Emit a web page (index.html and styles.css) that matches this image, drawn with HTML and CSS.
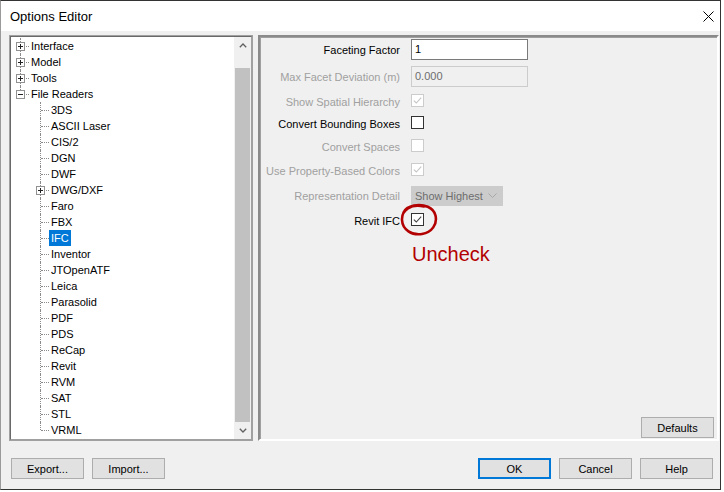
FILE: index.html
```html
<!DOCTYPE html>
<html lang="en">
<head>
  <meta charset="UTF-8" />
  <title>Options Editor</title>
  <link rel="stylesheet" href="styles.css">
</head>
<body>
  <div class="window">
    <div class="titlebar">
      <span class="title">Options Editor</span>
      <svg class="close" width="11" height="11" viewBox="0 0 11 11"><path d="M0.5 0.5L10.5 10.5M10.5 0.5L0.5 10.5" stroke="#000" stroke-width="1"/></svg>
    </div>

    <div class="content">
      <div class="main">
        <div class="tree">
          <div class="tree-inner">
            <div class="nodes">
              <div class="row l0">
                <svg class="box" width="9" height="9" viewBox="0 0 9 9"><rect x="0.5" y="0.5" width="8" height="8" fill="#fff" stroke="#919191"/><path d="M2 4.5h5M4.5 2v5" stroke="#222"/></svg>
                <span class="label">Interface</span>
              </div>
              <div class="row l0">
                <svg class="box" width="9" height="9" viewBox="0 0 9 9"><rect x="0.5" y="0.5" width="8" height="8" fill="#fff" stroke="#919191"/><path d="M2 4.5h5M4.5 2v5" stroke="#222"/></svg>
                <span class="label">Model</span>
              </div>
              <div class="row l0">
                <svg class="box" width="9" height="9" viewBox="0 0 9 9"><rect x="0.5" y="0.5" width="8" height="8" fill="#fff" stroke="#919191"/><path d="M2 4.5h5M4.5 2v5" stroke="#222"/></svg>
                <span class="label">Tools</span>
              </div>
              <div class="row l0 last">
                <svg class="box" width="9" height="9" viewBox="0 0 9 9"><rect x="0.5" y="0.5" width="8" height="8" fill="#fff" stroke="#919191"/><path d="M2 4.5h5" stroke="#222"/></svg>
                <span class="label">File Readers</span>
              </div>
              <div class="row l1"><span class="label">3DS</span></div>
              <div class="row l1"><span class="label">ASCII Laser</span></div>
              <div class="row l1"><span class="label">CIS/2</span></div>
              <div class="row l1"><span class="label">DGN</span></div>
              <div class="row l1"><span class="label">DWF</span></div>
              <div class="row l1">
                <svg class="box" width="9" height="9" viewBox="0 0 9 9"><rect x="0.5" y="0.5" width="8" height="8" fill="#fff" stroke="#919191"/><path d="M2 4.5h5M4.5 2v5" stroke="#222"/></svg>
                <span class="label">DWG/DXF</span>
              </div>
              <div class="row l1"><span class="label">Faro</span></div>
              <div class="row l1"><span class="label">FBX</span></div>
              <div class="row l1"><span class="label selected">IFC</span></div>
              <div class="row l1"><span class="label">Inventor</span></div>
              <div class="row l1"><span class="label">JTOpenATF</span></div>
              <div class="row l1"><span class="label">Leica</span></div>
              <div class="row l1"><span class="label">Parasolid</span></div>
              <div class="row l1"><span class="label">PDF</span></div>
              <div class="row l1"><span class="label">PDS</span></div>
              <div class="row l1"><span class="label">ReCap</span></div>
              <div class="row l1"><span class="label">Revit</span></div>
              <div class="row l1"><span class="label">RVM</span></div>
              <div class="row l1"><span class="label">SAT</span></div>
              <div class="row l1"><span class="label">STL</span></div>
              <div class="row l1 last"><span class="label">VRML</span></div>
            </div>

            <div class="scrollbar">
              <div class="arrow">
                <svg width="8" height="5" viewBox="0 0 8 5"><path d="M0.8 4.2L4 1L7.2 4.2" fill="none" stroke="#606060" stroke-width="1.3"/></svg>
              </div>
              <div class="track"><div class="thumb"></div></div>
              <div class="arrow">
                <svg width="8" height="5" viewBox="0 0 8 5"><path d="M0.8 0.8L4 4L7.2 0.8" fill="none" stroke="#606060" stroke-width="1.3"/></svg>
              </div>
            </div>
          </div>
        </div>

        <div class="panel">
          <div class="form">
            <span class="field-label">Faceting Factor</span>
            <div class="text">1</div>

            <span class="field-label off">Max Facet Deviation (m)</span>
            <div class="text off">0.000</div>

            <span class="field-label cb off">Show Spatial Hierarchy</span>
            <div class="check off">
              <svg width="11" height="11" viewBox="0 0 11 11"><path d="M1.8 5.6L4.3 8L9.2 2.6" fill="none" stroke="#c4c4c4" stroke-width="1.1"/></svg>
            </div>

            <span class="field-label cb">Convert Bounding Boxes</span>
            <div class="check"></div>

            <span class="field-label cb off">Convert Spaces</span>
            <div class="check off"></div>

            <span class="field-label cb off">Use Property-Based Colors</span>
            <div class="check off">
              <svg width="11" height="11" viewBox="0 0 11 11"><path d="M1.8 5.6L4.3 8L9.2 2.6" fill="none" stroke="#c4c4c4" stroke-width="1.1"/></svg>
            </div>

            <span class="field-label off">Representation Detail</span>
            <div class="combo">
              <span>Show Highest</span>
              <svg width="9" height="5" viewBox="0 0 9 5"><path d="M0.5 0.5L4.5 4.5L8.5 0.5" fill="none" stroke="#a8a8a8" stroke-width="1"/></svg>
            </div>

            <span class="field-label cb">Revit IFC</span>
            <div class="check">
              <svg width="11" height="11" viewBox="0 0 11 11"><path d="M1.8 5.6L4.3 8L9.2 2.6" fill="none" stroke="#444" stroke-width="1.1"/></svg>
            </div>
          </div>

          <div class="note">Uncheck</div>

          <svg class="scribble" width="40" height="34" viewBox="0 0 40 34">
            <path d="M25 3.5C12 0.5 2.5 7 3 17C3.5 27 13 32.5 23 31C33 29.5 38.5 21 36.5 12.5C34.5 4 25 1 15 2.5C10 3.5 6 6 4.5 9.5" fill="none" stroke="#b30000" stroke-width="2.6" stroke-linecap="round"/>
          </svg>

          <div class="panel-foot">
            <button class="btn">Defaults</button>
          </div>
        </div>
      </div>

      <div class="footer">
        <div class="group">
          <button class="btn">Export...</button>
          <button class="btn">Import...</button>
        </div>
        <div class="group">
          <button class="btn default">OK</button>
          <button class="btn">Cancel</button>
          <button class="btn">Help</button>
        </div>
      </div>
    </div>
  </div>
</body>
</html>
```

FILE: styles.css
```css
body {
  margin: 0;
  background: #fff;
  font-family: 'Liberation Sans', Arial, sans-serif;
  font-size: 11px;
  color: #000;
}

.window {
  width: 721px;
  height: 490px;
  box-sizing: border-box;
  border: 1px solid #333;
  border-left-color: #9a9a9a;
  display: flex;
  flex-direction: column;
}

.titlebar {
  height: 30px;
  flex: none;
  background: #fff;
  display: flex;
  align-items: center;
  justify-content: space-between;
  padding: 0 6px 0 9px;
}

.title {
  font-size: 13px;
  padding-top: 1px;
}

.content {
  flex: 1;
  background: #f0f0f0;
  padding: 4px 1px 0 8px;
  display: flex;
  flex-direction: column;
}

.main {
  display: flex;
  gap: 5px;
  height: 406px;
}

/* tree */

.tree {
  width: 244px;
  box-sizing: border-box;
  border: 1px solid #a0a0a0;
}

.tree-inner {
  height: 100%;
  box-sizing: border-box;
  border: 1px solid #696969;
  border-right-color: #a0a0a0;
  border-bottom-color: #a0a0a0;
  background: #fff;
  display: flex;
}

.nodes {
  flex: 1;
  padding-top: 1px;
  overflow: hidden;
}

.row {
  position: relative;
  height: 16px;
  display: flex;
  align-items: center;
  line-height: 16px;
  white-space: nowrap;
}

.row::before,
.row::after {
  content: '';
  position: absolute;
}

.row::before {
  top: 0;
  height: 16px;
  border-left: 1px dotted #8a8a8a;
}

.row::after {
  top: 8px;
  border-top: 1px dotted #8a8a8a;
}

.row.last::before {
  height: 8px;
}

.l0 { padding-left: 20px; }
.l0::before { left: 9px; }
.l0::after { left: 10px; width: 8px; }
.l0 .box { left: 5px; }

.l1 { padding-left: 40px; }
.l1::before { left: 29px; }
.l1::after { left: 30px; width: 8px; }
.l1 .box { left: 25px; }

.box {
  position: absolute;
  top: 4px;
  z-index: 1;
}

.label.selected {
  background: #0078d7;
  color: #fff;
  margin-left: -2px;
  padding: 0 2px;
}

.scrollbar {
  width: 17px;
  background: #f0f0f0;
  display: flex;
  flex-direction: column;
}

.arrow {
  height: 17px;
  display: flex;
  align-items: center;
  justify-content: center;
}

.track {
  flex: 1;
  display: flex;
  padding-top: 14px;
}

.thumb {
  flex: 1;
  margin: 0 1px;
  background: #c1c1c1;
}

/* right panel */

.panel {
  position: relative;
  width: 461px;
  box-sizing: border-box;
  border: 2px solid;
  border-color: #8a8a8a #fff #fff #8a8a8a;
  box-shadow: inset 1px 1px 0 #a0a0a0;
  display: flex;
  flex-direction: column;
}

.form {
  display: grid;
  grid-template-columns: 140px 1fr;
  grid-template-rows: 25px 29px 19px 25px 21px 26px 27px 20px;
  column-gap: 11px;
  align-items: center;
}

.field-label {
  text-align: right;
  white-space: nowrap;
}

.field-label.cb {
  padding-top: 3px;
}

.field-label.off {
  color: #a0a0a0;
}

.text {
  width: 117px;
  height: 21px;
  box-sizing: border-box;
  border: 1px solid #7a7a7a;
  background: #fff;
  padding: 0 3px;
  line-height: 19px;
}

.text.off {
  border-color: #cccccc;
  background: #f0f0f0;
  color: #6d6d6d;
}

.check {
  width: 13px;
  height: 13px;
  box-sizing: border-box;
  border: 1px solid #333;
  background: #fff;
}

.check svg {
  display: block;
}

.check.off {
  border-color: #cccccc;
}

.combo {
  width: 92px;
  height: 20px;
  box-sizing: border-box;
  background: #cccccc;
  border: 1px solid #cccccc;
  color: #6d6d6d;
  display: flex;
  align-items: center;
  justify-content: space-between;
  padding: 0 5px 0 3px;
}

.note {
  margin: 13px 0 0 152px;
  font-size: 20px;
  line-height: 24px;
  color: #b30000;
}

.scribble {
  position: absolute;
  left: 139px;
  top: 166px;
}

.panel-foot {
  margin-top: auto;
  display: flex;
  justify-content: flex-end;
  padding: 0 3px 1px 0;
}

/* buttons */

.btn {
  width: 73px;
  height: 21px;
  box-sizing: border-box;
  border: 1px solid #adadad;
  background: #e1e1e1;
  font-family: inherit;
  font-size: 11px;
  color: #000;
  padding: 0;
}

.btn.default {
  border: 2px solid #0078d7;
}

.footer {
  display: flex;
  justify-content: space-between;
  margin-top: 17px;
  padding: 0 6px 0 2px;
}

.group {
  display: flex;
  gap: 8px;
}
```
